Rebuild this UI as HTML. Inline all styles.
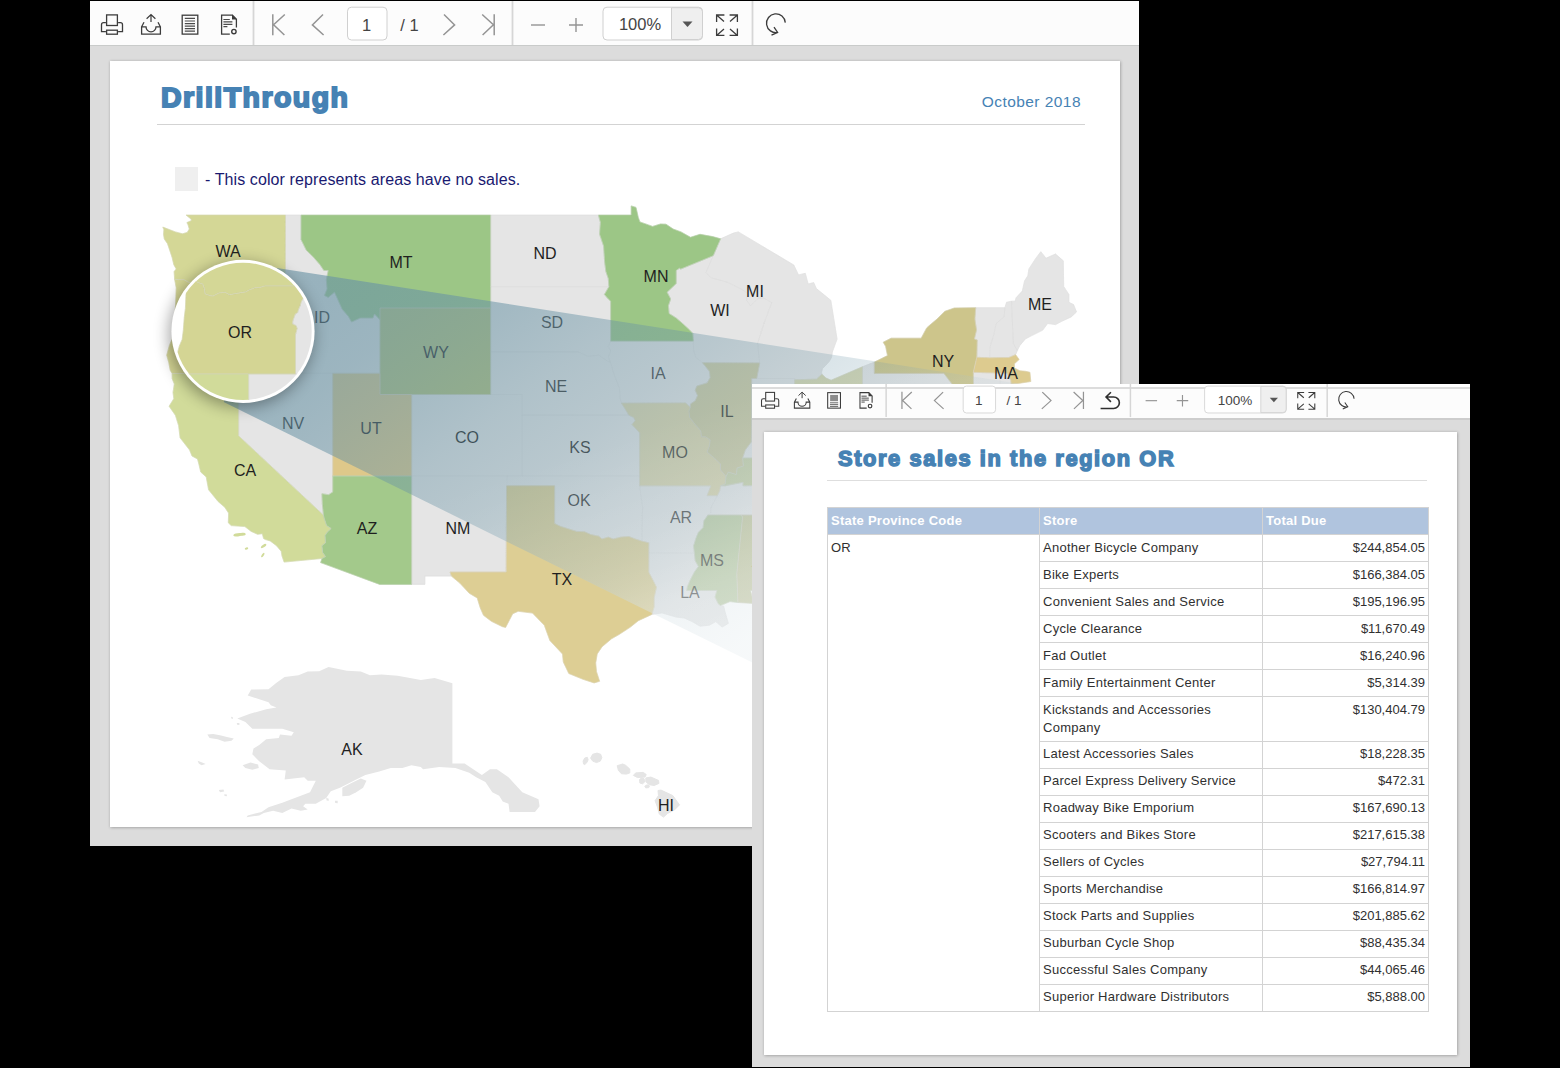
<!DOCTYPE html>
<html><head><meta charset="utf-8"><title>DrillThrough</title>
<style>
html,body{margin:0;padding:0;background:#000;}
body{width:1560px;height:1068px;position:relative;overflow:hidden;font-family:"Liberation Sans",sans-serif;}
.win{position:absolute;background:#dcdcdc;overflow:hidden;}
#w1{left:90px;top:1px;width:1049px;height:845px;}
#w2{left:752px;top:384px;width:718px;height:683px;}
.tb{position:absolute;left:0;top:0;width:100%;background:#fcfcfc;}
#w1 .tb{height:44px;border-bottom:1px solid #c9cbca;}
#w2 .tb{height:29px;border-bottom:2px solid #cdcdcd;background:#fcfcfc;}
.tbs{position:absolute;left:0;top:0;}
.sep{stroke:#d6d6d6;stroke-width:1.8;}
.tt{font-family:"Liberation Sans",sans-serif;font-size:16.5px;fill:#444;}
.page{position:absolute;background:#fff;box-shadow:0 0 3px 0.5px rgba(0,0,0,.32);}
#p1{left:20px;top:60px;width:1010px;height:766px;}
#p2{left:12px;top:48px;width:693px;height:623px;}
#t1{position:absolute;left:51px;top:19.5px;font-weight:bold;font-size:28.5px;color:#4682b4;-webkit-text-stroke:1.9px #4682b4;letter-spacing:1.45px;white-space:nowrap;}
#d1{position:absolute;right:39px;top:31.5px;letter-spacing:0.45px;font-size:15.5px;color:#4682b4;white-space:nowrap;}
.rule{position:absolute;height:1px;background:#d3d3d3;}
#lg{position:absolute;left:65px;top:106px;width:23px;height:24px;background:#efefef;}
#lt{position:absolute;left:95px;top:110px;font-size:16px;letter-spacing:0.1px;color:#191970;white-space:nowrap;}
#t2{position:absolute;left:74px;top:13.6px;font-weight:bold;font-size:21.8px;color:#4682b4;-webkit-text-stroke:1.5px #4682b4;letter-spacing:1.62px;white-space:nowrap;}
#map{position:absolute;left:0;top:0;}
#map text{font-family:"Liberation Sans",sans-serif;font-size:16px;fill:#1f1f1f;}
#tbl{position:absolute;left:63px;top:75px;border-collapse:collapse;font-size:13px;color:#303030;table-layout:fixed;width:601px;}
#tbl th{background:#b0c4de;color:#fff;font-weight:bold;text-align:left;height:27px;padding:0 0 2px 3px;border:1px solid #d3d3d3;font-size:13px;letter-spacing:0.25px;box-sizing:border-box;}
#tbl td{height:27px;padding:3.6px 3px 0 3px;border:1px solid #d3d3d3;vertical-align:top;line-height:18px;box-sizing:border-box;letter-spacing:0.26px;white-space:nowrap;}
#tbl tr.tall td{height:44.5px;}
#tbl td.r{text-align:right;letter-spacing:0;}
#tbl td.c1{vertical-align:top;}
</style></head><body>
<svg width="0" height="0" style="position:absolute">
<defs>
<g id="i-print" fill="none" stroke="#3c3c3c" stroke-width="1.3">
<rect x="-5.4" y="13.9" width="10.8" height="10.6"/>
<path d="M-6.1 21.6 H-8.4 a2.1 2.1 0 0 0 -2.1 2.1 V30.7 H-6.1 M6.1 21.6 H8.4 a2.1 2.1 0 0 1 2.1 2.1 V30.7 H6.1"/>
<rect x="-5.4" y="29.2" width="10.8" height="4"/>
</g>
<g id="i-export" fill="none" stroke="#3c3c3c" stroke-width="1.3">
<path d="M-7 21.2 L-9.4 25.8 V33.1 H9.4 V25.8 L7 21.2 M-9.4 25.8 H-5 A5 5 0 0 0 5 25.8 H9.4"/>
<path d="M0 21 V13.8 M-4.4 17.8 L0 13.6 L4.4 17.8" stroke-width="1.2"/>
</g>
<g id="i-doc" fill="none" stroke="#3c3c3c" stroke-width="1.3">
<rect x="-7.8" y="14.2" width="15.6" height="18.9"/>
<path d="M-5.2 17.4 H5 M-5.2 20 H5 M-5.2 22.6 H5 M-5.2 25.1 H5 M-5.2 27.7 H5 M-5.2 30.2 H5" stroke-width="1.2" stroke="#4a4a4a"/>
</g>
<g id="i-doc2" fill="none" stroke="#3c3c3c" stroke-width="1.3">
<rect x="-7.8" y="14.2" width="15.6" height="18.9"/>
<rect x="-4.8" y="17" width="9.6" height="7.6" fill="#8c8c8c" stroke="none"/>
<path d="M-5 26.6 H5 M-5 28.8 H5 M-5 31 H5" stroke-width="1" stroke="#4a4a4a"/>
</g>
<g id="i-docgear" fill="none" stroke="#3c3c3c" stroke-width="1.3">
<path d="M0.8 33.1 H-7.4 V14.2 H3.4 L7.4 18.2 V26.5"/>
<path d="M3 13.6 L8 18.6 H3 Z" fill="#3c3c3c" stroke="none"/>
<path d="M-5.6 18.5 H0.8 M-5.6 20.9 H3.4 M-5.6 23.3 H3.4 M-5.6 25.7 H-1.6" stroke-width="1.2" stroke="#4a4a4a"/>
<circle cx="4.9" cy="30.6" r="2.2" stroke-width="1.4"/>
</g>
<g id="i-first" fill="none" stroke="#949494" stroke-width="1.5"><path d="M-6.2 13.2 V34.2 M5.8 13.5 L-5.4 23.8 L5.4 34"/></g>
<g id="i-prev" fill="none" stroke="#949494" stroke-width="1.5"><path d="M5 13.5 L-5.6 23.9 L5.6 34"/></g>
<g id="i-next" fill="none" stroke="#949494" stroke-width="1.5"><path d="M-5 13.5 L5.6 23.9 L-5.6 34"/></g>
<g id="i-last" fill="none" stroke="#949494" stroke-width="1.5"><path d="M6.2 13.2 V34.2 M-5.8 13.5 L5.4 23.8 L-5.4 34"/></g>
<g id="i-back" fill="none" stroke="#2e2e2e" stroke-width="2"><path d="M-11.9 33.5 H4 A7 7 0 0 0 4 19.5 H-5 M0.7 13.7 L-5.2 19.5 L0.7 25.4"/></g>
<g id="i-minus" fill="none" stroke="#949494" stroke-width="1.4"><path d="M-7 24 H7"/></g>
<g id="i-plus" fill="none" stroke="#949494" stroke-width="1.4"><path d="M-7 24 H7 M0 17 V31"/></g>
<g id="i-full" fill="none" stroke="#3c3c3c" stroke-width="1.3">
<path d="M-10.4 21 V14 H-2.6 M-10.4 14 L-3 20.4"/>
<path d="M10.4 21 V14 H2.6 M10.4 14 L3 20.4"/>
<path d="M-10.4 27.4 V34.4 H-2.6 M-10.4 34.4 L-3 28"/>
<path d="M10.4 27.4 V34.4 H2.6 M10.4 34.4 L3 28"/>
</g>
<g id="i-refresh" fill="none" stroke="#3c3c3c" stroke-width="1.3">
<path d="M9.3 21.6 A9.4 9.4 0 1 0 1.6 31.5 M-2 26.2 L1.6 31.5 L-4.5 34.2"/>
</g>
</defs>
</svg>

<div id="w1" class="win">
 <div class="tb"><svg class="tbs" width="1049" height="45" viewBox="0 0 1049.00 45.00">
<use href="#i-print" x="22" y="0"/>
<use href="#i-export" x="61" y="0"/>
<use href="#i-doc" x="100" y="0"/>
<use href="#i-docgear" x="139" y="0"/>
<line class="sep" x1="163.5" y1="0" x2="163.5" y2="44"/>
<use href="#i-first" x="189" y="0"/>
<use href="#i-prev" x="228" y="0"/>
<rect x="257.5" y="6.2" width="39.5" height="32.8" rx="4" fill="#fff" stroke="#d0d0d0"/>
<text class="tt" x="276.5" y="29.8" text-anchor="middle">1</text>
<text class="tt" x="319.5" y="29.8" text-anchor="middle">/ 1</text>
<use href="#i-next" x="359" y="0"/>
<use href="#i-last" x="398" y="0"/>
<line class="sep" x1="422.5" y1="0" x2="422.5" y2="44"/>
<use href="#i-minus" x="448" y="0"/>
<use href="#i-plus" x="486" y="0"/>
<rect x="513" y="6.2" width="99.5" height="32.8" rx="4" fill="#fff" stroke="#d0d0d0"/>
<path d="M581.5 6.7 h27 a4 4 0 0 1 4 4 v23.8 a4 4 0 0 1 -4 4 h-27 z" fill="#efefef" stroke="#d0d0d0"/>
<path d="M592.5 20.5 h10 l-5 5.5 z" fill="#555"/>
<text class="tt" x="550" y="29.3" text-anchor="middle">100%</text>
<use href="#i-full" x="637" y="0"/>
<line class="sep" x1="662.5" y1="0" x2="662.5" y2="44"/>
<use href="#i-refresh" x="686" y="0"/>
</svg></div>
 <div id="p1" class="page">
  <div id="t1">DrillThrough</div>
  <div id="d1">October 2018</div>
  <div class="rule" style="left:47px;top:63px;width:928px"></div>
  <div id="lg"></div><div id="lt">- This color represents areas have no sales.</div>
 </div>
</div>
<svg id="map" width="1560" height="1068" viewBox="0 0 1560 1068">
<defs>
<clipPath id="pageclip"><rect x="110" y="61" width="1010" height="766"/></clipPath>
<clipPath id="circ"><circle cx="243" cy="331.4" r="68.7"/></clipPath>
<linearGradient id="beamg" gradientUnits="userSpaceOnUse" x1="264" y1="352" x2="576" y2="768">
<stop offset="0" stop-color="#6993a5" stop-opacity="0.62"/>
<stop offset="0.12" stop-color="#6993a5" stop-opacity="0.585"/>
<stop offset="0.21" stop-color="#6993a5" stop-opacity="0.535"/>
<stop offset="0.365" stop-color="#6993a5" stop-opacity="0.43"/>
<stop offset="0.5" stop-color="#6993a5" stop-opacity="0.36"/>
<stop offset="0.625" stop-color="#6993a5" stop-opacity="0.27"/>
<stop offset="0.737" stop-color="#6993a5" stop-opacity="0.2"/>
<stop offset="0.86" stop-color="#6993a5" stop-opacity="0.1"/>
<stop offset="1" stop-color="#6993a5" stop-opacity="0.06"/>
</linearGradient>
<linearGradient id="beamw" gradientUnits="userSpaceOnUse" x1="300" y1="536.8" x2="369.3" y2="756.2">
<stop offset="0" stop-color="#fff" stop-opacity="0"/>
<stop offset="0.217" stop-color="#fff" stop-opacity="0.1"/>
<stop offset="0.435" stop-color="#fff" stop-opacity="0.2"/>
<stop offset="0.63" stop-color="#fff" stop-opacity="0.3"/>
<stop offset="0.74" stop-color="#fff" stop-opacity="0.38"/>
<stop offset="1" stop-color="#fff" stop-opacity="0.5"/>
</linearGradient>
<filter id="sh" x="-40%" y="-40%" width="180%" height="180%"><feGaussianBlur stdDeviation="8"/></filter>
<g id="mapg">
<path d="M238.6 373.4L332.8 373.4L332.8 491.9L328.6 494.7L321.9 493.7L322.3 503.4L323.1 511.2L323.4 515.1L238.6 435.8Z" fill="#e5e5e5" stroke="#e5e5e5" stroke-width="0.6"/>
<path d="M285.5 215.1L301.0 215.1L301.0 239.5L306.2 250.1L312.9 256.6L320.0 264.7L323.9 270.5L328.2 270.5L326.3 279.7L327.1 288.8L324.5 295.4L328.2 297.4L334.5 292.2L342.1 309.1L348.4 316.4L351.6 322.0L360.2 318.0L372.9 318.0L374.5 314.0L380.0 319.8L380.0 373.4L285.5 373.4L285.5 333.9L287.1 327.9L286.0 325.1L282.5 323.5L282.8 320.2L285.2 313.5L287.6 312.0L288.4 309.1L290.3 304.6L291.2 301.2L293.1 297.8L294.5 294.5L293.1 291.1L289.5 288.8L287.3 285.4L287.3 285.4L286.6 279.7L285.4 275.6Z" fill="#e5e5e5" stroke="#e5e5e5" stroke-width="0.6"/>
<path d="M490.6 215.1L598.4 215.1L600.4 222.3L599.6 234.3L603.6 246.1L604.7 262.4L605.9 271.6L608.3 278.5L608.9 286.7L490.6 286.7Z" fill="#e5e5e5" stroke="#e5e5e5" stroke-width="0.6"/>
<path d="M490.6 286.7L608.9 286.7L604.4 294.5L608.3 299.0L610.7 301.2L610.7 341.1L608.3 346.5L610.7 350.9L608.3 357.3L610.7 362.7L606.7 360.6L598.8 355.2L587.8 356.3L578.3 351.9L490.6 351.9Z" fill="#e5e5e5" stroke="#e5e5e5" stroke-width="0.6"/>
<path d="M490.6 351.9L578.3 351.9L587.8 356.3L598.8 355.2L606.7 360.6L610.7 362.7L613.1 371.3L616.2 379.8L619.4 388.2L620.2 398.7L622.5 404.9L628.9 415.3L522.2 415.3L522.2 394.5L490.6 394.5Z" fill="#e5e5e5" stroke="#e5e5e5" stroke-width="0.6"/>
<path d="M522.2 415.3L628.9 415.3L633.6 417.4L635.2 420.5L632.0 424.6L639.9 432.8L639.6 476.0L522.2 476.0Z" fill="#e5e5e5" stroke="#e5e5e5" stroke-width="0.6"/>
<path d="M507.2 476.0L639.6 476.0L639.6 485.8L642.6 507.3L641.8 541.1L635.2 539.0L628.9 536.5L621.0 537.1L613.1 539.0L608.3 537.1L602.0 539.0L598.8 536.2L590.9 534.6L584.6 531.8L576.7 531.4L567.2 528.5L560.9 526.6L554.6 523.5L554.6 485.8L507.2 485.8Z" fill="#e5e5e5" stroke="#e5e5e5" stroke-width="0.6"/>
<path d="M411.6 394.5L522.2 394.5L522.2 476.0L411.6 476.0Z" fill="#e5e5e5" stroke="#e5e5e5" stroke-width="0.6"/>
<path d="M411.6 476.0L507.2 476.0L506.6 485.8L506.2 572.0L450.0 572.0L451.4 576.1L424.9 576.1L424.9 584.4L411.6 584.4Z" fill="#e5e5e5" stroke="#e5e5e5" stroke-width="0.6"/>
<path d="M610.7 341.1L693.3 341.1L693.6 349.8L695.7 357.3L702.5 362.7L709.4 371.3L710.2 377.6L707.1 382.9L696.8 386.1L695.2 390.3L697.6 395.6L695.2 400.8L690.5 403.9L690.2 407.4L685.7 402.9L621.4 403.1L620.2 398.7L619.4 388.2L616.2 379.8L613.1 371.3L610.7 362.7L608.3 357.3L610.7 350.9L608.3 346.5L610.7 341.1Z" fill="#e5e5e5" stroke="#e5e5e5" stroke-width="0.6"/>
<path d="M639.6 485.8L711.0 485.8L707.1 495.6L717.3 495.6L714.2 501.5L711.0 507.3L711.0 512.5L707.9 515.1L703.9 520.8L703.1 527.6L698.4 532.3L696.0 538.1L693.6 545.7L694.4 553.2L648.8 552.8L648.8 542.8L641.8 541.1L642.6 507.3Z" fill="#e5e5e5" stroke="#e5e5e5" stroke-width="0.6"/>
<path d="M648.8 552.8L694.4 553.2L695.2 560.7L698.4 566.4L694.4 572.0L690.5 579.4L687.3 586.8L686.8 590.5L716.9 590.5L715.0 597.0L718.1 603.4L720.2 605.6L723.7 606.1L725.2 612.5L728.4 623.4L722.1 627.1L715.8 621.6L709.4 625.2L700.0 626.2L692.1 621.6L684.2 618.0L676.2 617.1L662.0 612.9L651.9 614.4L651.9 614.4L654.1 607.1L654.1 597.9L656.5 587.2L652.6 579.4L648.8 572.2Z" fill="#e5e5e5" stroke="#e5e5e5" stroke-width="0.6"/>
<path d="M693.3 341.1L692.8 333.4L689.7 330.1L682.6 323.5L676.2 318.0L669.1 313.5L668.4 305.7L670.7 299.0L667.1 292.2L676.2 283.6L676.2 270.5L679.4 268.2L680.7 269.1L713.2 255.7L706.0 272.3L706.0 272.3L710.7 277.6L726.8 282.0L733.9 285.4L742.6 289.9L747.4 293.3L746.6 300.1L750.5 305.7L750.5 305.7L758.4 298.1L763.9 298.1L771.8 302.6L764.7 321.3L757.6 343.3L759.7 362.9L702.5 362.7L695.7 357.3L693.6 349.8L693.3 341.1Z" fill="#e5e5e5" stroke="#e5e5e5" stroke-width="0.6"/>
<path d="M713.2 255.7L720.6 238.8L733.4 233.1L738.3 231.9L793.8 265.0L798.5 274.9L805.3 273.3L808.2 284.0L813.7 282.6L816.4 288.6L830.8 300.3L837.1 339.1L832.4 351.9L831.6 357.3L829.2 361.6L824.8 366.3L822.4 368.7L821.6 372.3L821.9 374.2L816.6 379.1L794.6 379.8L794.6 378.5L756.7 378.5L759.7 362.9L757.6 343.3L764.7 321.3L771.8 302.6L763.9 298.1L758.4 298.1L750.5 305.7L746.6 300.1L747.4 293.3L742.6 289.9L733.9 285.4L726.8 282.0L710.7 277.6L706.0 272.3Z" fill="#e5e5e5" stroke="#e5e5e5" stroke-width="0.6"/>
<path d="M751.6 378.5L794.6 378.5L794.4 433.8L785.3 441.9L775.8 456.0L760.0 458.0L742.6 458.0L745.3 450.0L751.3 441.9L751.6 428.7Z" fill="#e5e5e5" stroke="#e5e5e5" stroke-width="0.6"/>
<path d="M720.5 485.8L743.1 482.3L743.1 485.8L812.4 483.9L843.7 483.9L802.7 515.1L707.9 515.1L711.0 512.5L711.0 507.3L714.2 501.5L717.3 495.6L719.7 490.7Z" fill="#e5e5e5" stroke="#e5e5e5" stroke-width="0.6"/>
<path d="M975.7 307.7L1004.9 307.7L1004.1 316.9L996.2 323.5L993.8 334.5L989.9 347.6L989.7 357.8L976.8 357.3L977.2 340.0L974.4 338.9L976.5 330.1L974.9 319.1Z" fill="#e5e5e5" stroke="#e5e5e5" stroke-width="0.6"/>
<path d="M1004.9 307.7L1006.5 302.3L1011.5 301.2L1013.3 343.3L1015.6 347.6L1017.5 350.2L1015.6 354.7L1008.8 357.5L989.7 357.8L989.9 347.6L993.8 334.5L996.2 323.5L1004.1 316.9Z" fill="#e5e5e5" stroke="#e5e5e5" stroke-width="0.6"/>
<path d="M1011.5 301.2L1015.2 301.2L1016.0 297.8L1022.3 291.1L1024.6 280.8L1027.8 275.8L1028.9 268.9L1035.4 258.9L1040.8 251.7L1046.0 258.2L1055.5 254.0L1063.3 260.8L1063.7 286.5L1068.9 294.5L1068.9 302.3L1073.6 304.6L1076.5 312.0L1071.2 316.9L1061.8 321.3L1055.5 324.6L1047.6 323.5L1042.8 330.1L1031.8 335.6L1025.4 338.9L1019.9 345.4L1017.5 350.2L1015.6 347.6L1013.3 343.3Z" fill="#e5e5e5" stroke="#e5e5e5" stroke-width="0.6"/>
<path d="M973.3 372.3L985.1 372.7L1000.2 373.0L1000.2 387.6L973.6 394.5L973.6 390.3Z" fill="#e5e5e5" stroke="#e5e5e5" stroke-width="0.6"/>
<path d="M1000.2 373.0L1006.8 373.0L1010.7 380.2L1011.2 384.0L1000.2 387.6Z" fill="#e5e5e5" stroke="#e5e5e5" stroke-width="0.6"/>
<path d="M954.3 386.9L967.0 394.5L962.2 401.8L965.4 404.9L965.4 419.4L951.2 436.8L941.7 426.6L943.3 419.4L953.5 411.2L948.0 396.6Z" fill="#e5e5e5" stroke="#e5e5e5" stroke-width="0.6"/>
<path d="M862.4 366.8L874.4 362.1L874.4 373.4L943.9 373.4L954.3 386.9L948.0 396.6L953.5 411.2L943.3 419.4L862.4 421.1Z" fill="#e5e5e5" stroke="#e5e5e5" stroke-width="0.6"/>
<path d="M285.5 215.1L285.4 275.6L286.6 279.7L287.3 285.4L254.7 285.4L249.7 287.0L244.9 287.2L239.1 289.5L235.4 291.5L230.7 292.2L224.4 293.3L219.6 294.2L214.9 291.7L208.6 292.6L203.0 295.6L199.9 295.1L195.0 293.3L194.4 288.1L192.8 283.6L188.0 282.0L184.1 279.7L179.3 279.7L174.6 279.2L174.1 271.6L176.2 268.9L173.8 264.7L172.2 257.8L169.9 250.8L167.5 243.7L164.3 239.0L163.5 234.3L163.9 229.7L162.8 227.1L175.4 231.9L182.5 233.8L187.2 232.4L189.3 229.0L188.0 224.7L186.9 222.6L191.2 220.7L191.2 219.2L186.1 215.1Z" fill="#d4d796" stroke="#d4d796" stroke-width="0.6"/>
<path d="M174.6 279.2L179.3 279.7L184.1 279.7L188.0 282.0L192.8 283.6L194.4 288.1L195.0 293.3L199.9 295.1L203.0 295.6L208.6 292.6L214.9 291.7L219.6 294.2L224.4 293.3L230.7 292.2L235.4 291.5L239.1 289.5L244.9 287.2L249.7 287.0L254.7 285.4L287.3 285.4L289.5 288.8L293.1 291.1L294.5 294.5L293.1 297.8L291.2 301.2L290.3 304.6L288.4 309.1L287.6 312.0L285.2 313.5L282.8 320.2L282.5 323.5L286.0 325.1L287.1 327.9L285.5 333.9L285.5 373.4L172.1 373.4L170.2 370.2L168.8 362.7L166.7 355.2L169.4 345.4L172.2 338.9L173.3 330.1L174.3 316.9L175.4 308.0L175.9 296.7L176.2 287.7L174.6 279.2Z" fill="#d4d594" stroke="#d4d594" stroke-width="0.6"/>
<path d="M172.1 373.4L238.6 373.4L238.6 435.8L323.4 515.1L324.4 518.9L326.6 525.6L331.2 528.5L327.1 532.3L325.0 535.6L325.5 542.8L321.9 545.7L322.6 552.3L325.5 556.6L322.0 558.5L284.1 562.1L282.0 556.0L281.2 551.3L276.5 545.7L270.2 540.9L265.5 539.6L263.6 538.6L262.3 533.7L257.6 534.3L251.2 531.4L244.9 526.6L231.2 525.6L228.3 522.8L228.6 513.1L224.8 507.3L218.1 501.5L208.6 489.8L207.5 483.9L206.2 476.9L200.7 472.0L199.1 465.0L197.5 459.0L192.0 456.0L189.6 450.0L180.1 437.8L178.6 425.6L175.4 415.3L169.1 406.2L173.8 398.7L173.0 392.4L174.3 384.0L172.2 378.7Z" fill="#d1db9a" stroke="#d1db9a" stroke-width="0.6"/>
<path d="M380.0 319.8L374.5 314.0L372.9 318.0L360.2 318.0L351.6 322.0L348.4 316.4L342.1 309.1L334.5 292.2L328.2 297.4L324.5 295.4L327.1 288.8L326.3 279.7L328.2 270.5L323.9 270.5L320.0 264.7L312.9 256.6L306.2 250.1L301.0 239.5L301.0 215.1L490.6 215.1L490.6 308.0L380.0 308.0Z" fill="#9cc686" stroke="#9cc686" stroke-width="0.6"/>
<path d="M380.0 308.0L490.6 308.0L490.6 394.5L380.0 394.5Z" fill="#b5c27a" stroke="#b5c27a" stroke-width="0.6"/>
<path d="M332.8 373.4L380.0 373.4L380.0 394.5L411.6 394.5L411.6 476.0L332.8 476.0Z" fill="#dec88a" stroke="#dec88a" stroke-width="0.6"/>
<path d="M332.8 476.0L411.6 476.0L411.6 584.4L379.7 584.4L320.6 562.6L322.0 558.5L325.5 556.6L322.6 552.3L321.9 545.7L325.5 542.8L325.0 535.6L327.1 532.3L331.2 528.5L326.6 525.6L324.4 518.9L323.4 515.1L323.1 511.2L322.3 503.4L321.9 493.7L328.6 494.7L332.8 491.9Z" fill="#a3c98b" stroke="#a3c98b" stroke-width="0.6"/>
<path d="M506.6 485.8L554.6 485.8L554.6 523.5L560.9 526.6L567.2 528.5L576.7 531.4L584.6 531.8L590.9 534.6L598.8 536.2L602.0 539.0L608.3 537.1L613.1 539.0L621.0 537.1L628.9 536.5L635.2 539.0L641.8 541.1L648.8 542.8L648.8 572.2L652.6 579.4L656.5 587.2L654.1 597.9L654.1 607.1L651.9 614.4L638.3 620.7L630.4 627.1L619.4 634.3L611.5 638.8L602.0 646.8L597.2 654.0L595.7 662.9L596.5 671.7L599.6 681.3L594.1 682.9L583.0 679.3L568.8 673.5L563.3 662.0L562.5 654.0L549.9 640.6L544.3 625.2L532.5 613.1L518.2 611.3L512.7 613.8L505.6 627.4L502.5 626.7L491.4 621.3L483.5 615.3L480.3 608.0L477.2 597.9L469.3 593.3L459.8 583.1L451.4 576.1L450.0 572.0L506.2 572.0Z" fill="#ddce94" stroke="#ddce94" stroke-width="0.6"/>
<path d="M608.9 286.7L608.3 278.5L605.9 271.6L604.7 262.4L603.6 246.1L599.6 234.3L600.4 222.3L598.4 215.1L631.2 215.1L631.2 205.9L636.0 207.4L638.3 217.5L639.9 221.9L652.6 226.4L660.5 224.0L666.0 224.2L673.1 229.0L681.0 231.9L690.5 237.3L700.0 234.3L712.6 236.6L720.6 238.8L713.2 255.7L680.7 269.1L679.4 268.2L676.2 270.5L676.2 283.6L667.1 292.2L670.7 299.0L668.4 305.7L669.1 313.5L676.2 318.0L682.6 323.5L689.7 330.1L692.8 333.4L693.3 341.1L610.7 341.1L610.7 341.1L610.7 301.2L608.3 299.0L604.4 294.5L608.9 286.7Z" fill="#9cc686" stroke="#9cc686" stroke-width="0.6"/>
<path d="M621.4 403.1L685.7 402.9L690.2 407.4L688.9 411.2L689.7 417.4L695.2 424.6L700.7 430.7L701.5 436.8L705.5 436.8L710.2 439.9L709.4 445.9L707.1 452.0L714.2 458.0L720.5 464.0L720.5 470.0L726.0 476.4L725.2 483.9L720.5 485.8L719.7 490.7L717.3 495.6L707.1 495.6L711.0 485.8L639.6 485.8L639.6 432.8L632.0 424.6L635.2 420.5L633.6 417.4L628.9 415.3L626.5 411.2Z" fill="#ddd6b0" stroke="#ddd6b0" stroke-width="0.6"/>
<path d="M702.5 362.7L759.7 362.9L756.7 378.5L751.6 378.5L751.6 428.7L751.3 441.9L745.3 450.0L742.6 458.0L742.6 458.0L743.4 466.0L737.1 468.0L736.3 474.6L728.4 472.0L726.0 476.4L726.0 476.4L720.5 470.0L720.5 464.0L714.2 458.0L707.1 452.0L709.4 445.9L710.2 439.9L705.5 436.8L701.5 436.8L700.7 430.7L695.2 424.6L689.7 417.4L688.9 411.2L690.2 407.4L690.5 403.9L695.2 400.8L697.6 395.6L695.2 390.3L696.8 386.1L707.1 382.9L710.2 377.6L709.4 371.3L702.5 362.7Z" fill="#d1cda7" stroke="#d1cda7" stroke-width="0.6"/>
<path d="M726.0 476.4L728.4 472.0L736.3 474.6L737.1 468.0L743.4 466.0L742.6 458.0L760.0 458.0L775.8 456.0L785.3 441.9L794.4 433.8L831.1 445.9L839.0 466.0L812.4 483.9L743.1 485.8L743.1 482.3L725.2 485.8L720.5 485.8L725.2 483.9L726.0 476.4Z" fill="#cbd2ab" stroke="#cbd2ab" stroke-width="0.6"/>
<path d="M707.9 515.1L741.0 515.1L742.6 517.0L736.8 573.8L737.9 602.5L730.0 601.6L720.2 605.6L718.1 603.4L715.0 597.0L716.9 590.5L686.8 590.5L687.3 586.8L690.5 579.4L694.4 572.0L698.4 566.4L695.2 560.7L694.4 553.2L693.6 545.7L696.0 538.1L698.4 532.3L703.1 527.6L703.9 520.8L707.9 515.1Z" fill="#bbcba3" stroke="#bbcba3" stroke-width="0.6"/>
<path d="M741.0 515.1L782.1 515.1L791.6 566.4L791.6 590.5L750.5 590.5L753.7 603.4L737.9 602.5L736.8 573.8L742.6 517.0Z" fill="#c5c8a1" stroke="#c5c8a1" stroke-width="0.6"/>
<path d="M794.6 379.8L816.6 379.1L821.9 374.2L826.0 378.1L831.1 380.2L862.4 366.8L862.4 402.0L831.1 445.9L794.4 433.8Z" fill="#d8d8b2" stroke="#d8d8b2" stroke-width="0.6"/>
<path d="M874.4 362.1L887.5 355.6L885.6 346.3L883.2 342.2L891.1 338.2L921.2 338.2L926.7 327.9L929.1 325.7L937.0 319.1L944.9 311.3L954.3 308.0L975.7 307.7L974.9 319.1L976.5 330.1L974.4 338.9L977.2 340.0L976.8 357.3L973.3 372.3L973.6 390.3L970.1 395.6L997.0 390.3L999.4 395.6L965.4 404.9L962.2 401.8L967.0 394.5L954.3 386.9L943.9 373.4L874.4 373.4Z" fill="#cdc58b" stroke="#cdc58b" stroke-width="0.6"/>
<path d="M973.3 372.3L976.8 357.3L989.7 357.8L1008.8 357.5L1015.6 354.7L1019.1 359.5L1014.4 363.8L1014.4 368.1L1019.9 370.8L1025.4 371.3L1029.9 372.3L1030.8 381.5L1018.3 383.4L1011.2 384.0L1010.7 380.2L1006.8 373.0L1000.2 373.0L985.1 372.7Z" fill="#ddcb8f" stroke="#ddcb8f" stroke-width="0.6"/>
<path d="M238.6 373.4L332.8 373.4L332.8 491.9L328.6 494.7L321.9 493.7L322.3 503.4L323.1 511.2L323.4 515.1L238.6 435.8Z" fill="none" stroke="#d6d6d6" stroke-opacity="0.3" stroke-width="0.9"/>
<path d="M285.5 215.1L301.0 215.1L301.0 239.5L306.2 250.1L312.9 256.6L320.0 264.7L323.9 270.5L328.2 270.5L326.3 279.7L327.1 288.8L324.5 295.4L328.2 297.4L334.5 292.2L342.1 309.1L348.4 316.4L351.6 322.0L360.2 318.0L372.9 318.0L374.5 314.0L380.0 319.8L380.0 373.4L285.5 373.4L285.5 333.9L287.1 327.9L286.0 325.1L282.5 323.5L282.8 320.2L285.2 313.5L287.6 312.0L288.4 309.1L290.3 304.6L291.2 301.2L293.1 297.8L294.5 294.5L293.1 291.1L289.5 288.8L287.3 285.4L287.3 285.4L286.6 279.7L285.4 275.6Z" fill="none" stroke="#d6d6d6" stroke-opacity="0.3" stroke-width="0.9"/>
<path d="M490.6 215.1L598.4 215.1L600.4 222.3L599.6 234.3L603.6 246.1L604.7 262.4L605.9 271.6L608.3 278.5L608.9 286.7L490.6 286.7Z" fill="none" stroke="#d6d6d6" stroke-opacity="0.3" stroke-width="0.9"/>
<path d="M490.6 286.7L608.9 286.7L604.4 294.5L608.3 299.0L610.7 301.2L610.7 341.1L608.3 346.5L610.7 350.9L608.3 357.3L610.7 362.7L606.7 360.6L598.8 355.2L587.8 356.3L578.3 351.9L490.6 351.9Z" fill="none" stroke="#d6d6d6" stroke-opacity="0.3" stroke-width="0.9"/>
<path d="M490.6 351.9L578.3 351.9L587.8 356.3L598.8 355.2L606.7 360.6L610.7 362.7L613.1 371.3L616.2 379.8L619.4 388.2L620.2 398.7L622.5 404.9L628.9 415.3L522.2 415.3L522.2 394.5L490.6 394.5Z" fill="none" stroke="#d6d6d6" stroke-opacity="0.3" stroke-width="0.9"/>
<path d="M522.2 415.3L628.9 415.3L633.6 417.4L635.2 420.5L632.0 424.6L639.9 432.8L639.6 476.0L522.2 476.0Z" fill="none" stroke="#d6d6d6" stroke-opacity="0.3" stroke-width="0.9"/>
<path d="M507.2 476.0L639.6 476.0L639.6 485.8L642.6 507.3L641.8 541.1L635.2 539.0L628.9 536.5L621.0 537.1L613.1 539.0L608.3 537.1L602.0 539.0L598.8 536.2L590.9 534.6L584.6 531.8L576.7 531.4L567.2 528.5L560.9 526.6L554.6 523.5L554.6 485.8L507.2 485.8Z" fill="none" stroke="#d6d6d6" stroke-opacity="0.3" stroke-width="0.9"/>
<path d="M411.6 394.5L522.2 394.5L522.2 476.0L411.6 476.0Z" fill="none" stroke="#d6d6d6" stroke-opacity="0.3" stroke-width="0.9"/>
<path d="M411.6 476.0L507.2 476.0L506.6 485.8L506.2 572.0L450.0 572.0L451.4 576.1L424.9 576.1L424.9 584.4L411.6 584.4Z" fill="none" stroke="#d6d6d6" stroke-opacity="0.3" stroke-width="0.9"/>
<path d="M610.7 341.1L693.3 341.1L693.6 349.8L695.7 357.3L702.5 362.7L709.4 371.3L710.2 377.6L707.1 382.9L696.8 386.1L695.2 390.3L697.6 395.6L695.2 400.8L690.5 403.9L690.2 407.4L685.7 402.9L621.4 403.1L620.2 398.7L619.4 388.2L616.2 379.8L613.1 371.3L610.7 362.7L608.3 357.3L610.7 350.9L608.3 346.5L610.7 341.1Z" fill="none" stroke="#d6d6d6" stroke-opacity="0.3" stroke-width="0.9"/>
<path d="M639.6 485.8L711.0 485.8L707.1 495.6L717.3 495.6L714.2 501.5L711.0 507.3L711.0 512.5L707.9 515.1L703.9 520.8L703.1 527.6L698.4 532.3L696.0 538.1L693.6 545.7L694.4 553.2L648.8 552.8L648.8 542.8L641.8 541.1L642.6 507.3Z" fill="none" stroke="#d6d6d6" stroke-opacity="0.3" stroke-width="0.9"/>
<path d="M648.8 552.8L694.4 553.2L695.2 560.7L698.4 566.4L694.4 572.0L690.5 579.4L687.3 586.8L686.8 590.5L716.9 590.5L715.0 597.0L718.1 603.4L720.2 605.6L723.7 606.1L725.2 612.5L728.4 623.4L722.1 627.1L715.8 621.6L709.4 625.2L700.0 626.2L692.1 621.6L684.2 618.0L676.2 617.1L662.0 612.9L651.9 614.4L651.9 614.4L654.1 607.1L654.1 597.9L656.5 587.2L652.6 579.4L648.8 572.2Z" fill="none" stroke="#d6d6d6" stroke-opacity="0.3" stroke-width="0.9"/>
<path d="M693.3 341.1L692.8 333.4L689.7 330.1L682.6 323.5L676.2 318.0L669.1 313.5L668.4 305.7L670.7 299.0L667.1 292.2L676.2 283.6L676.2 270.5L679.4 268.2L680.7 269.1L713.2 255.7L706.0 272.3L706.0 272.3L710.7 277.6L726.8 282.0L733.9 285.4L742.6 289.9L747.4 293.3L746.6 300.1L750.5 305.7L750.5 305.7L758.4 298.1L763.9 298.1L771.8 302.6L764.7 321.3L757.6 343.3L759.7 362.9L702.5 362.7L695.7 357.3L693.6 349.8L693.3 341.1Z" fill="none" stroke="#d6d6d6" stroke-opacity="0.3" stroke-width="0.9"/>
<path d="M713.2 255.7L720.6 238.8L733.4 233.1L738.3 231.9L793.8 265.0L798.5 274.9L805.3 273.3L808.2 284.0L813.7 282.6L816.4 288.6L830.8 300.3L837.1 339.1L832.4 351.9L831.6 357.3L829.2 361.6L824.8 366.3L822.4 368.7L821.6 372.3L821.9 374.2L816.6 379.1L794.6 379.8L794.6 378.5L756.7 378.5L759.7 362.9L757.6 343.3L764.7 321.3L771.8 302.6L763.9 298.1L758.4 298.1L750.5 305.7L746.6 300.1L747.4 293.3L742.6 289.9L733.9 285.4L726.8 282.0L710.7 277.6L706.0 272.3Z" fill="none" stroke="#d6d6d6" stroke-opacity="0.3" stroke-width="0.9"/>
<path d="M751.6 378.5L794.6 378.5L794.4 433.8L785.3 441.9L775.8 456.0L760.0 458.0L742.6 458.0L745.3 450.0L751.3 441.9L751.6 428.7Z" fill="none" stroke="#d6d6d6" stroke-opacity="0.3" stroke-width="0.9"/>
<path d="M720.5 485.8L743.1 482.3L743.1 485.8L812.4 483.9L843.7 483.9L802.7 515.1L707.9 515.1L711.0 512.5L711.0 507.3L714.2 501.5L717.3 495.6L719.7 490.7Z" fill="none" stroke="#d6d6d6" stroke-opacity="0.3" stroke-width="0.9"/>
<path d="M975.7 307.7L1004.9 307.7L1004.1 316.9L996.2 323.5L993.8 334.5L989.9 347.6L989.7 357.8L976.8 357.3L977.2 340.0L974.4 338.9L976.5 330.1L974.9 319.1Z" fill="none" stroke="#d6d6d6" stroke-opacity="0.3" stroke-width="0.9"/>
<path d="M1004.9 307.7L1006.5 302.3L1011.5 301.2L1013.3 343.3L1015.6 347.6L1017.5 350.2L1015.6 354.7L1008.8 357.5L989.7 357.8L989.9 347.6L993.8 334.5L996.2 323.5L1004.1 316.9Z" fill="none" stroke="#d6d6d6" stroke-opacity="0.3" stroke-width="0.9"/>
<path d="M1011.5 301.2L1015.2 301.2L1016.0 297.8L1022.3 291.1L1024.6 280.8L1027.8 275.8L1028.9 268.9L1035.4 258.9L1040.8 251.7L1046.0 258.2L1055.5 254.0L1063.3 260.8L1063.7 286.5L1068.9 294.5L1068.9 302.3L1073.6 304.6L1076.5 312.0L1071.2 316.9L1061.8 321.3L1055.5 324.6L1047.6 323.5L1042.8 330.1L1031.8 335.6L1025.4 338.9L1019.9 345.4L1017.5 350.2L1015.6 347.6L1013.3 343.3Z" fill="none" stroke="#d6d6d6" stroke-opacity="0.3" stroke-width="0.9"/>
<path d="M973.3 372.3L985.1 372.7L1000.2 373.0L1000.2 387.6L973.6 394.5L973.6 390.3Z" fill="none" stroke="#d6d6d6" stroke-opacity="0.3" stroke-width="0.9"/>
<path d="M1000.2 373.0L1006.8 373.0L1010.7 380.2L1011.2 384.0L1000.2 387.6Z" fill="none" stroke="#d6d6d6" stroke-opacity="0.3" stroke-width="0.9"/>
<path d="M954.3 386.9L967.0 394.5L962.2 401.8L965.4 404.9L965.4 419.4L951.2 436.8L941.7 426.6L943.3 419.4L953.5 411.2L948.0 396.6Z" fill="none" stroke="#d6d6d6" stroke-opacity="0.3" stroke-width="0.9"/>
<path d="M862.4 366.8L874.4 362.1L874.4 373.4L943.9 373.4L954.3 386.9L948.0 396.6L953.5 411.2L943.3 419.4L862.4 421.1Z" fill="none" stroke="#d6d6d6" stroke-opacity="0.3" stroke-width="0.9"/>
<path d="M285.5 215.1L285.4 275.6L286.6 279.7L287.3 285.4L254.7 285.4L249.7 287.0L244.9 287.2L239.1 289.5L235.4 291.5L230.7 292.2L224.4 293.3L219.6 294.2L214.9 291.7L208.6 292.6L203.0 295.6L199.9 295.1L195.0 293.3L194.4 288.1L192.8 283.6L188.0 282.0L184.1 279.7L179.3 279.7L174.6 279.2L174.1 271.6L176.2 268.9L173.8 264.7L172.2 257.8L169.9 250.8L167.5 243.7L164.3 239.0L163.5 234.3L163.9 229.7L162.8 227.1L175.4 231.9L182.5 233.8L187.2 232.4L189.3 229.0L188.0 224.7L186.9 222.6L191.2 220.7L191.2 219.2L186.1 215.1Z" fill="none" stroke="#d6d6d6" stroke-opacity="0.3" stroke-width="0.9"/>
<path d="M174.6 279.2L179.3 279.7L184.1 279.7L188.0 282.0L192.8 283.6L194.4 288.1L195.0 293.3L199.9 295.1L203.0 295.6L208.6 292.6L214.9 291.7L219.6 294.2L224.4 293.3L230.7 292.2L235.4 291.5L239.1 289.5L244.9 287.2L249.7 287.0L254.7 285.4L287.3 285.4L289.5 288.8L293.1 291.1L294.5 294.5L293.1 297.8L291.2 301.2L290.3 304.6L288.4 309.1L287.6 312.0L285.2 313.5L282.8 320.2L282.5 323.5L286.0 325.1L287.1 327.9L285.5 333.9L285.5 373.4L172.1 373.4L170.2 370.2L168.8 362.7L166.7 355.2L169.4 345.4L172.2 338.9L173.3 330.1L174.3 316.9L175.4 308.0L175.9 296.7L176.2 287.7L174.6 279.2Z" fill="none" stroke="#d6d6d6" stroke-opacity="0.3" stroke-width="0.9"/>
<path d="M172.1 373.4L238.6 373.4L238.6 435.8L323.4 515.1L324.4 518.9L326.6 525.6L331.2 528.5L327.1 532.3L325.0 535.6L325.5 542.8L321.9 545.7L322.6 552.3L325.5 556.6L322.0 558.5L284.1 562.1L282.0 556.0L281.2 551.3L276.5 545.7L270.2 540.9L265.5 539.6L263.6 538.6L262.3 533.7L257.6 534.3L251.2 531.4L244.9 526.6L231.2 525.6L228.3 522.8L228.6 513.1L224.8 507.3L218.1 501.5L208.6 489.8L207.5 483.9L206.2 476.9L200.7 472.0L199.1 465.0L197.5 459.0L192.0 456.0L189.6 450.0L180.1 437.8L178.6 425.6L175.4 415.3L169.1 406.2L173.8 398.7L173.0 392.4L174.3 384.0L172.2 378.7Z" fill="none" stroke="#d6d6d6" stroke-opacity="0.3" stroke-width="0.9"/>
<path d="M380.0 319.8L374.5 314.0L372.9 318.0L360.2 318.0L351.6 322.0L348.4 316.4L342.1 309.1L334.5 292.2L328.2 297.4L324.5 295.4L327.1 288.8L326.3 279.7L328.2 270.5L323.9 270.5L320.0 264.7L312.9 256.6L306.2 250.1L301.0 239.5L301.0 215.1L490.6 215.1L490.6 308.0L380.0 308.0Z" fill="none" stroke="#d6d6d6" stroke-opacity="0.3" stroke-width="0.9"/>
<path d="M380.0 308.0L490.6 308.0L490.6 394.5L380.0 394.5Z" fill="none" stroke="#d6d6d6" stroke-opacity="0.3" stroke-width="0.9"/>
<path d="M332.8 373.4L380.0 373.4L380.0 394.5L411.6 394.5L411.6 476.0L332.8 476.0Z" fill="none" stroke="#d6d6d6" stroke-opacity="0.3" stroke-width="0.9"/>
<path d="M332.8 476.0L411.6 476.0L411.6 584.4L379.7 584.4L320.6 562.6L322.0 558.5L325.5 556.6L322.6 552.3L321.9 545.7L325.5 542.8L325.0 535.6L327.1 532.3L331.2 528.5L326.6 525.6L324.4 518.9L323.4 515.1L323.1 511.2L322.3 503.4L321.9 493.7L328.6 494.7L332.8 491.9Z" fill="none" stroke="#d6d6d6" stroke-opacity="0.3" stroke-width="0.9"/>
<path d="M506.6 485.8L554.6 485.8L554.6 523.5L560.9 526.6L567.2 528.5L576.7 531.4L584.6 531.8L590.9 534.6L598.8 536.2L602.0 539.0L608.3 537.1L613.1 539.0L621.0 537.1L628.9 536.5L635.2 539.0L641.8 541.1L648.8 542.8L648.8 572.2L652.6 579.4L656.5 587.2L654.1 597.9L654.1 607.1L651.9 614.4L638.3 620.7L630.4 627.1L619.4 634.3L611.5 638.8L602.0 646.8L597.2 654.0L595.7 662.9L596.5 671.7L599.6 681.3L594.1 682.9L583.0 679.3L568.8 673.5L563.3 662.0L562.5 654.0L549.9 640.6L544.3 625.2L532.5 613.1L518.2 611.3L512.7 613.8L505.6 627.4L502.5 626.7L491.4 621.3L483.5 615.3L480.3 608.0L477.2 597.9L469.3 593.3L459.8 583.1L451.4 576.1L450.0 572.0L506.2 572.0Z" fill="none" stroke="#d6d6d6" stroke-opacity="0.3" stroke-width="0.9"/>
<path d="M608.9 286.7L608.3 278.5L605.9 271.6L604.7 262.4L603.6 246.1L599.6 234.3L600.4 222.3L598.4 215.1L631.2 215.1L631.2 205.9L636.0 207.4L638.3 217.5L639.9 221.9L652.6 226.4L660.5 224.0L666.0 224.2L673.1 229.0L681.0 231.9L690.5 237.3L700.0 234.3L712.6 236.6L720.6 238.8L713.2 255.7L680.7 269.1L679.4 268.2L676.2 270.5L676.2 283.6L667.1 292.2L670.7 299.0L668.4 305.7L669.1 313.5L676.2 318.0L682.6 323.5L689.7 330.1L692.8 333.4L693.3 341.1L610.7 341.1L610.7 341.1L610.7 301.2L608.3 299.0L604.4 294.5L608.9 286.7Z" fill="none" stroke="#d6d6d6" stroke-opacity="0.3" stroke-width="0.9"/>
<path d="M621.4 403.1L685.7 402.9L690.2 407.4L688.9 411.2L689.7 417.4L695.2 424.6L700.7 430.7L701.5 436.8L705.5 436.8L710.2 439.9L709.4 445.9L707.1 452.0L714.2 458.0L720.5 464.0L720.5 470.0L726.0 476.4L725.2 483.9L720.5 485.8L719.7 490.7L717.3 495.6L707.1 495.6L711.0 485.8L639.6 485.8L639.6 432.8L632.0 424.6L635.2 420.5L633.6 417.4L628.9 415.3L626.5 411.2Z" fill="none" stroke="#d6d6d6" stroke-opacity="0.3" stroke-width="0.9"/>
<path d="M702.5 362.7L759.7 362.9L756.7 378.5L751.6 378.5L751.6 428.7L751.3 441.9L745.3 450.0L742.6 458.0L742.6 458.0L743.4 466.0L737.1 468.0L736.3 474.6L728.4 472.0L726.0 476.4L726.0 476.4L720.5 470.0L720.5 464.0L714.2 458.0L707.1 452.0L709.4 445.9L710.2 439.9L705.5 436.8L701.5 436.8L700.7 430.7L695.2 424.6L689.7 417.4L688.9 411.2L690.2 407.4L690.5 403.9L695.2 400.8L697.6 395.6L695.2 390.3L696.8 386.1L707.1 382.9L710.2 377.6L709.4 371.3L702.5 362.7Z" fill="none" stroke="#d6d6d6" stroke-opacity="0.3" stroke-width="0.9"/>
<path d="M726.0 476.4L728.4 472.0L736.3 474.6L737.1 468.0L743.4 466.0L742.6 458.0L760.0 458.0L775.8 456.0L785.3 441.9L794.4 433.8L831.1 445.9L839.0 466.0L812.4 483.9L743.1 485.8L743.1 482.3L725.2 485.8L720.5 485.8L725.2 483.9L726.0 476.4Z" fill="none" stroke="#d6d6d6" stroke-opacity="0.3" stroke-width="0.9"/>
<path d="M707.9 515.1L741.0 515.1L742.6 517.0L736.8 573.8L737.9 602.5L730.0 601.6L720.2 605.6L718.1 603.4L715.0 597.0L716.9 590.5L686.8 590.5L687.3 586.8L690.5 579.4L694.4 572.0L698.4 566.4L695.2 560.7L694.4 553.2L693.6 545.7L696.0 538.1L698.4 532.3L703.1 527.6L703.9 520.8L707.9 515.1Z" fill="none" stroke="#d6d6d6" stroke-opacity="0.3" stroke-width="0.9"/>
<path d="M741.0 515.1L782.1 515.1L791.6 566.4L791.6 590.5L750.5 590.5L753.7 603.4L737.9 602.5L736.8 573.8L742.6 517.0Z" fill="none" stroke="#d6d6d6" stroke-opacity="0.3" stroke-width="0.9"/>
<path d="M794.6 379.8L816.6 379.1L821.9 374.2L826.0 378.1L831.1 380.2L862.4 366.8L862.4 402.0L831.1 445.9L794.4 433.8Z" fill="none" stroke="#d6d6d6" stroke-opacity="0.3" stroke-width="0.9"/>
<path d="M874.4 362.1L887.5 355.6L885.6 346.3L883.2 342.2L891.1 338.2L921.2 338.2L926.7 327.9L929.1 325.7L937.0 319.1L944.9 311.3L954.3 308.0L975.7 307.7L974.9 319.1L976.5 330.1L974.4 338.9L977.2 340.0L976.8 357.3L973.3 372.3L973.6 390.3L970.1 395.6L997.0 390.3L999.4 395.6L965.4 404.9L962.2 401.8L967.0 394.5L954.3 386.9L943.9 373.4L874.4 373.4Z" fill="none" stroke="#d6d6d6" stroke-opacity="0.3" stroke-width="0.9"/>
<path d="M973.3 372.3L976.8 357.3L989.7 357.8L1008.8 357.5L1015.6 354.7L1019.1 359.5L1014.4 363.8L1014.4 368.1L1019.9 370.8L1025.4 371.3L1029.9 372.3L1030.8 381.5L1018.3 383.4L1011.2 384.0L1010.7 380.2L1006.8 373.0L1000.2 373.0L985.1 372.7Z" fill="none" stroke="#d6d6d6" stroke-opacity="0.3" stroke-width="0.9"/>
<ellipse cx="237.8" cy="534.8" rx="4.5" ry="1.6" transform="rotate(-8 237.8 534.8)" fill="#d1db9a"/>
<ellipse cx="242.5" cy="534.3" rx="3.2" ry="1.5" transform="rotate(-5 242.5 534.3)" fill="#d1db9a"/>
<ellipse cx="246.5" cy="548.5" rx="1.8" ry="1.1" transform="rotate(-20 246.5 548.5)" fill="#d1db9a"/>
<ellipse cx="263.6" cy="546.0" rx="3.2" ry="1.3" transform="rotate(-35 263.6 546.0)" fill="#d1db9a"/>
<ellipse cx="262.8" cy="555.1" rx="2.6" ry="1.0" transform="rotate(-55 262.8 555.1)" fill="#d1db9a"/>
<path d="M328.5 667.0L346.9 670.7L360.8 671.6L370.0 675.3L381.5 674.6L397.7 675.8L420.8 679.9L434.6 678.1L452.4 683.2L452.4 763.5L464.6 763.5L478.5 772.7L481.9 775.0L490.0 769.2L496.9 769.2L508.5 777.3L522.3 792.3L538.5 799.2L539.6 806.2L535.0 811.9L509.6 811.9L508.5 803.8L502.7 801.5L499.2 795.8L492.3 792.3L485.4 781.9L476.2 777.3L469.2 772.7L455.4 768.1L439.2 766.9L423.1 769.2L420.8 766.9L411.5 765.3L402.3 768.1L390.8 768.1L379.2 771.5L365.4 775.0L356.2 779.6L340.0 787.7L330.8 791.2L326.2 798.1L315.8 803.8L305.4 803.8L303.1 806.2L307.7 809.6L300.8 810.8L291.5 808.5L282.3 813.1L273.1 810.8L263.8 813.1L259.2 815.4L246.5 817.2L247.7 815.4L261.5 811.9L268.5 807.3L282.3 802.7L291.5 799.2L300.8 795.8L310.0 792.3L315.8 780.8L307.7 780.8L304.2 777.3L284.6 779.6L285.8 770.4L269.6 769.2L259.2 761.2L252.3 754.2L253.5 748.5L259.2 745.0L266.2 739.2L278.8 738.1L280.0 734.6L291.5 735.8L293.8 732.3L282.3 728.8L270.8 728.8L252.3 728.8L245.4 721.9L237.3 718.5L250.0 713.8L266.2 709.2L276.5 707.6L270.8 705.3L268.5 702.3L247.7 695.4L251.2 689.6L268.5 689.2L276.5 682.7L284.6 676.9L298.5 675.3L307.7 671.6L319.2 671.2Z" fill="#e5e5e5"/>
<path d="M342.3 787.7L351.5 783.1L360.8 778.5L366.5 780.8L363.1 787.7L356.2 792.3L349.2 795.8L342.3 796.2Z" fill="#e5e5e5"/>
<path d="M207.3 734.6L213.1 733.9L220.0 735.3L226.9 736.9L233.8 738.5L231.5 740.8L224.6 741.8L217.7 739.2L209.6 738.1Z" fill="#e5e5e5"/>
<path d="M242.6 765.3L250.5 762.5L258.1 764.6L258.8 768.1L252.3 769.7L245.4 768.1Z" fill="#e5e5e5"/>
<path d="M197.6 760.7L201.5 762.3L205.7 763.9L201.5 765.3L198.8 763.5Z" fill="#e5e5e5"/>
<path d="M218.8 790.0L223.5 789.5L224.2 791.6L220.0 792.3Z" fill="#e5e5e5"/>
<path d="M224.2 794.2L226.9 794.4L226.9 796.2L224.6 796.0Z" fill="#e5e5e5"/>
<path d="M231.1 716.8L232.9 717.3L232.9 718.9L231.3 718.5Z" fill="#e5e5e5"/>
<path d="M236.8 723.1L239.4 723.1L239.4 724.9L237.1 724.7Z" fill="#e5e5e5"/>
<path d="M326.2 798.1L328.5 798.5L328.9 800.8L326.6 800.4Z" fill="#e5e5e5"/>
<path d="M334.9 800.8L337.7 800.8L337.7 803.2L335.2 802.9Z" fill="#e5e5e5"/>
<path d="M583.5 764.0L583.1 761.1L584.7 758.1L587.3 757.3L588.1 759.8L586.8 762.7L584.7 764.6Z" fill="#e5e5e5" stroke="#e5e5e5" stroke-width="1" stroke-linejoin="round"/>
<path d="M590.6 758.1L592.7 754.3L597.0 753.1L600.7 754.3L601.8 757.7L600.3 761.1L596.5 762.6L592.7 761.1Z" fill="#e5e5e5" stroke="#e5e5e5" stroke-width="1" stroke-linejoin="round"/>
<path d="M617.2 765.7L622.7 764.0L625.6 765.3L629.8 769.1L629.8 772.9L626.4 774.1L621.4 773.7L618.4 770.3Z" fill="#e5e5e5" stroke="#e5e5e5" stroke-width="1" stroke-linejoin="round"/>
<path d="M633.4 775.4L635.7 772.9L643.3 772.4L646.2 774.5L645.0 777.1L637.4 777.5Z" fill="#e5e5e5" stroke="#e5e5e5" stroke-width="1" stroke-linejoin="round"/>
<path d="M639.5 779.6L641.6 777.9L644.1 778.8L644.6 782.1L642.5 783.8L639.9 783.0Z" fill="#e5e5e5" stroke="#e5e5e5" stroke-width="1" stroke-linejoin="round"/>
<path d="M645.8 777.9L650.9 777.1L658.5 780.4L658.9 783.4L654.2 785.5L649.2 784.7L645.8 781.7Z" fill="#e5e5e5" stroke="#e5e5e5" stroke-width="1" stroke-linejoin="round"/>
<path d="M644.8 786.2L647.1 784.8L649.4 785.9L648.8 787.6L645.8 787.9Z" fill="#e5e5e5" stroke="#e5e5e5" stroke-width="1" stroke-linejoin="round"/>
<path d="M658.0 790.5L661.0 790.1L672.8 795.6L679.5 804.9L674.5 809.9L667.7 813.3L663.5 817.1L659.3 814.1L657.6 807.4L655.1 800.7L658.5 795.6Z" fill="#e5e5e5" stroke="#e5e5e5" stroke-width="1" stroke-linejoin="round"/>
</g>
</defs>
<g clip-path="url(#pageclip)">
<use href="#mapg"/>
<g id="lbl">
<text x="228" y="257" text-anchor="middle">WA</text>
<text x="240" y="338" text-anchor="middle">OR</text>
<text x="245" y="476" text-anchor="middle">CA</text>
<text x="293" y="429" text-anchor="middle">NV</text>
<text x="322" y="323" text-anchor="middle">ID</text>
<text x="401" y="268" text-anchor="middle">MT</text>
<text x="436" y="358" text-anchor="middle">WY</text>
<text x="371" y="434" text-anchor="middle">UT</text>
<text x="467" y="443" text-anchor="middle">CO</text>
<text x="367" y="534" text-anchor="middle">AZ</text>
<text x="458" y="534" text-anchor="middle">NM</text>
<text x="545" y="259" text-anchor="middle">ND</text>
<text x="552" y="328" text-anchor="middle" fill-opacity="0.9">SD</text>
<text x="556" y="392" text-anchor="middle" fill-opacity="0.9">NE</text>
<text x="580" y="453" text-anchor="middle" fill-opacity="0.9">KS</text>
<text x="579" y="506" text-anchor="middle" fill-opacity="0.9">OK</text>
<text x="562" y="585" text-anchor="middle">TX</text>
<text x="656" y="282" text-anchor="middle">MN</text>
<text x="658" y="379" text-anchor="middle" fill-opacity="0.8">IA</text>
<text x="675" y="458" text-anchor="middle" fill-opacity="0.8">MO</text>
<text x="681" y="523" text-anchor="middle" fill-opacity="0.8">AR</text>
<text x="690" y="598" text-anchor="middle" fill-opacity="0.8">LA</text>
<text x="720" y="316" text-anchor="middle">WI</text>
<text x="727" y="417" text-anchor="middle" fill-opacity="0.8">IL</text>
<text x="755" y="297" text-anchor="middle">MI</text>
<text x="712" y="566" text-anchor="middle" fill-opacity="0.8">MS</text>
<text x="943" y="367" text-anchor="middle">NY</text>
<text x="1006" y="379" text-anchor="middle">MA</text>
<text x="1040" y="310" text-anchor="middle">ME</text>
<text x="761.5" y="567" text-anchor="middle" fill-opacity="0.8">AL</text>
<text x="352" y="755" text-anchor="middle">AK</text>
<text x="666" y="811" text-anchor="middle">HI</text>
</g>
<polygon points="277,268 1100,396.4 1100,834 223.7,402" fill="url(#beamw)"/>
<polygon points="277,268 1100,396.4 1100,834 223.7,402" fill="url(#beamg)"/>
<circle cx="241" cy="335" r="72" fill="#000" opacity="0.36" filter="url(#sh)"/>
<circle cx="243" cy="331.4" r="71.6" fill="#fff"/>
<g clip-path="url(#circ)"><rect x="150" y="240" width="200" height="200" fill="#fff"/><use href="#mapg" x="10" y="0.5"/>
<text x="240" y="338" text-anchor="middle">OR</text></g>
</g>
</svg>
<div id="w2" class="win">
 <div style="position:absolute;left:0;top:0;width:100%;height:3px;background:#fff"></div>
 <div class="tb" style="top:3px;border-top:2px solid #dcdcdc"><div style="position:absolute;left:0.3px;top:-8.3px"><svg class="tbs" width="720" height="36.9" viewBox="0 0 878.05 45.00">
<use href="#i-print" x="22" y="0"/>
<use href="#i-export" x="61" y="0"/>
<use href="#i-doc2" x="100" y="0"/>
<use href="#i-docgear" x="139" y="0"/>
<line class="sep" x1="163.5" y1="0" x2="163.5" y2="44"/>
<use href="#i-first" x="189" y="0"/>
<use href="#i-prev" x="228" y="0"/>
<rect x="257.5" y="6.2" width="39.5" height="32.8" rx="4" fill="#fff" stroke="#d0d0d0"/>
<text class="tt" x="276.5" y="29.8" text-anchor="middle">1</text>
<text class="tt" x="319.5" y="29.8" text-anchor="middle">/ 1</text>
<use href="#i-next" x="359" y="0"/>
<use href="#i-last" x="398" y="0"/>
<use href="#i-back" x="437" y="0"/>
<line class="sep" x1="461.5" y1="0" x2="461.5" y2="44"/>
<use href="#i-minus" x="487" y="0"/>
<use href="#i-plus" x="525" y="0"/>
<rect x="552" y="6.2" width="99.5" height="32.8" rx="4" fill="#fff" stroke="#d0d0d0"/>
<path d="M620.5 6.7 h27 a4 4 0 0 1 4 4 v23.8 a4 4 0 0 1 -4 4 h-27 z" fill="#efefef" stroke="#d0d0d0"/>
<path d="M631.5 20.5 h10 l-5 5.5 z" fill="#555"/>
<text class="tt" x="589" y="29.3" text-anchor="middle">100%</text>
<use href="#i-full" x="676" y="0"/>
<line class="sep" x1="701.5" y1="0" x2="701.5" y2="44"/>
<use href="#i-refresh" x="725" y="0"/>
</svg></div></div>
 <div id="p2" class="page">
  <div id="t2">Store sales in the region OR</div>
  <div class="rule" style="left:63px;top:48px;width:600px;background:#dedede"></div>
  <table id="tbl"><colgroup><col style="width:212px"><col style="width:223px"><col style="width:166px"></colgroup><tr class="h"><th>State Province Code</th><th>Store</th><th>Total Due</th></tr>
<tr><td rowspan="17" class="c1">OR</td><td>Another Bicycle Company</td><td class="r">$244,854.05</td></tr>
<tr><td>Bike Experts</td><td class="r">$166,384.05</td></tr>
<tr><td>Convenient Sales and Service</td><td class="r">$195,196.95</td></tr>
<tr><td>Cycle Clearance</td><td class="r">$11,670.49</td></tr>
<tr><td>Fad Outlet</td><td class="r">$16,240.96</td></tr>
<tr><td>Family Entertainment Center</td><td class="r">$5,314.39</td></tr>
<tr class="tall"><td>Kickstands and Accessories<br>Company</td><td class="r">$130,404.79</td></tr>
<tr><td>Latest Accessories Sales</td><td class="r">$18,228.35</td></tr>
<tr><td>Parcel Express Delivery Service</td><td class="r">$472.31</td></tr>
<tr><td>Roadway Bike Emporium</td><td class="r">$167,690.13</td></tr>
<tr><td>Scooters and Bikes Store</td><td class="r">$217,615.38</td></tr>
<tr><td>Sellers of Cycles</td><td class="r">$27,794.11</td></tr>
<tr><td>Sports Merchandise</td><td class="r">$166,814.97</td></tr>
<tr><td>Stock Parts and Supplies</td><td class="r">$201,885.62</td></tr>
<tr><td>Suburban Cycle Shop</td><td class="r">$88,435.34</td></tr>
<tr><td>Successful Sales Company</td><td class="r">$44,065.46</td></tr>
<tr><td>Superior Hardware Distributors</td><td class="r">$5,888.00</td></tr>
</table>
 </div>
</div>
</body></html>
